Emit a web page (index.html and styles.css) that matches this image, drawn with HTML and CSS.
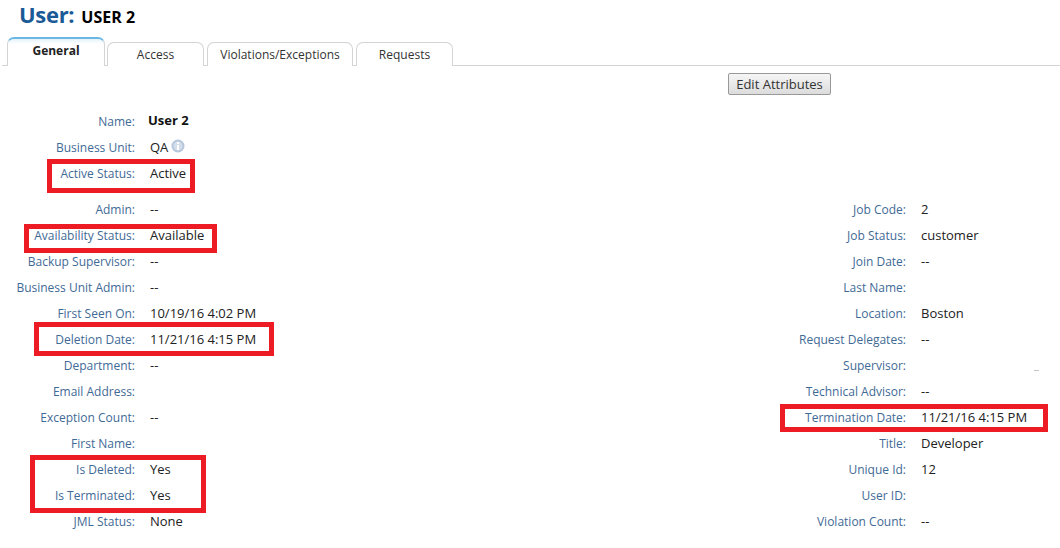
FILE: index.html
```html
<!DOCTYPE html>
<html>
    <head>
        <title>User: USER 2</title>
        <link rel="stylesheet" href="styles.css">
    </head>
    <body>
        <div class="Title">
            <h1>User:</h1>
            <h2>USER 2</h2>
        </div>

        <div class="Tabs">
            <a class="Tab Active">General</a>
            <a class="Tab">Access</a>
            <a class="Tab Wide">Violations/Exceptions</a>
            <a class="Tab">Requests</a>
        </div>

        <div class="Actions">
            <button class="Button">Edit Attributes</button>
        </div>

        <div class="Top">
            <div class="Row"><span class="Label">Name:</span><b class="Value">User 2</b></div>
            <div class="Row">
                <span class="Label">Business Unit:</span>
                <span class="Value">QA</span>
                <svg class="Info" width="14" height="14" viewBox="0 0 14 14">
                    <circle cx="7" cy="7" r="6.5" fill="#b5c6dc"/>
                    <circle cx="7" cy="7" r="4.6" fill="#d3deea"/>
                    <rect x="6" y="6" width="2" height="5" fill="#fff"/>
                    <rect x="6" y="3" width="2" height="2" fill="#fff"/>
                </svg>
            </div>
            <div class="Row"><span class="Label">Active Status:</span><span class="Value">Active</span></div>
        </div>

        <div class="Columns">
            <div class="Col Left">
                <div class="Row"><span class="Label">Admin:</span><span class="Value">--</span></div>
                <div class="Row"><span class="Label">Availability Status:</span><span class="Value">Available</span></div>
                <div class="Row"><span class="Label">Backup Supervisor:</span><span class="Value">--</span></div>
                <div class="Row"><span class="Label">Business Unit Admin:</span><span class="Value">--</span></div>
                <div class="Row"><span class="Label">First Seen On:</span><span class="Value">10/19/16 4:02 PM</span></div>
                <div class="Row"><span class="Label">Deletion Date:</span><span class="Value">11/21/16 4:15 PM</span></div>
                <div class="Row"><span class="Label">Department:</span><span class="Value">--</span></div>
                <div class="Row"><span class="Label">Email Address:</span><span class="Value"></span></div>
                <div class="Row"><span class="Label">Exception Count:</span><span class="Value">--</span></div>
                <div class="Row"><span class="Label">First Name:</span><span class="Value"></span></div>
                <div class="Row"><span class="Label">Is Deleted:</span><span class="Value">Yes</span></div>
                <div class="Row"><span class="Label">Is Terminated:</span><span class="Value">Yes</span></div>
                <div class="Row"><span class="Label">JML Status:</span><span class="Value">None</span></div>
            </div>
            <div class="Col">
                <div class="Row"><span class="Label">Job Code:</span><span class="Value">2</span></div>
                <div class="Row"><span class="Label">Job Status:</span><span class="Value">customer</span></div>
                <div class="Row"><span class="Label">Join Date:</span><span class="Value">--</span></div>
                <div class="Row"><span class="Label">Last Name:</span><span class="Value"></span></div>
                <div class="Row"><span class="Label">Location:</span><span class="Value">Boston</span></div>
                <div class="Row"><span class="Label">Request Delegates:</span><span class="Value">--</span></div>
                <div class="Row"><span class="Label">Supervisor:</span><span class="Value"></span></div>
                <div class="Row"><span class="Label">Technical Advisor:</span><span class="Value">--</span></div>
                <div class="Row"><span class="Label">Termination Date:</span><span class="Value">11/21/16 4:15 PM</span></div>
                <div class="Row"><span class="Label">Title:</span><span class="Value">Developer</span></div>
                <div class="Row"><span class="Label">Unique Id:</span><span class="Value">12</span></div>
                <div class="Row"><span class="Label">User ID:</span><span class="Value"></span></div>
                <div class="Row"><span class="Label">Violation Count:</span><span class="Value">--</span></div>
            </div>
        </div>

        <!-- Red highlights drawn over the screenshot -->
        <div class="Mark MarkActive"></div>
        <div class="Mark MarkAvail"></div>
        <div class="Mark MarkDeletion"></div>
        <div class="Mark MarkDeleted"></div>
        <div class="Mark MarkTermination"></div>
        <div class="Smudge"></div>
    </body>
</html>
```

FILE: styles.css
```css
html, body {
    height: 100%;
    overflow: hidden;
}
body {
    margin: 0;
    position: relative;
    background-color: #fff;
    font-family: "Open Sans", "Liberation Sans", sans-serif;
    font-size: 12px;
    color: #222;
}
.Title {
    display: flex;
    align-items: baseline;
    gap: 7px;
    height: 37px;
    padding-left: 19px;
    box-sizing: border-box;
}
h1 {
    margin: 0;
    font-size: 22px;
    line-height: 28px;
    font-weight: 700;
    letter-spacing: -0.3px;
    color: #1a5a96;
}
h2 {
    margin: 0;
    font-size: 16px;
    line-height: 28px;
    font-weight: 700;
    color: #000;
}
.Tabs {
    display: flex;
    align-items: flex-end;
    gap: 3px;
    height: 29px;
    margin-left: 2px;
    padding-left: 5px;
    border-bottom: 1px solid #d4d4d4;
    box-sizing: border-box;
}
.Tab {
    width: 97px;
    height: 24px;
    box-sizing: border-box;
    margin-bottom: -1px;
    border: 1px solid #d4d4d4;
    border-bottom: 0;
    border-radius: 7px 7px 0 0;
    background-color: #fff;
    text-align: center;
    line-height: 23px;
    color: #333;
}
.Wide {
    width: 146px;
}
.Active {
    width: 98px;
    height: 29px;
    margin-right: -1px;
    border-top: 2px solid #6cb8e4;
    line-height: 23px;
    font-weight: 700;
    color: #222;
    background-image: linear-gradient(#e4f3fb, #fff 5px);
}
.Actions {
    height: 42px;
    padding: 7px 0 0 728px;
    box-sizing: border-box;
}
.Button {
    width: 103px;
    height: 22px;
    padding: 0;
    border: 1px solid #999;
    border-radius: 2px;
    background-image: linear-gradient(#f6f6f6, #dcdcdc);
    font-family: inherit;
    font-size: 13px;
    color: #333;
}
.Top {
    margin-bottom: 10px;
}
.Columns {
    display: flex;
}
.Left {
    width: 771px;
}
.Row {
    display: flex;
    align-items: center;
    height: 26px;
}
.Label {
    width: 135px;
    text-align: right;
    color: #3f6a96;
    white-space: nowrap;
    flex-shrink: 0;
    display: flex;
    justify-content: flex-end;
}
.Value {
    margin-left: 15px;
    font-size: 13px;
}
b.Value {
    margin-left: 13px;
    margin-bottom: 2px;
    color: #111;
}
.Info {
    margin-left: 3px;
    margin-top: -3px;
}
.Mark {
    position: absolute;
    border: 5px solid #ed1c24;
    box-sizing: border-box;
}
.MarkActive {
    left: 47px;
    top: 159px;
    width: 148px;
    height: 34px;
}
.MarkAvail {
    left: 24px;
    top: 224px;
    width: 193px;
    height: 29px;
}
.MarkDeletion {
    left: 34px;
    top: 322px;
    width: 240px;
    height: 34px;
}
.MarkDeleted {
    left: 30px;
    top: 455px;
    width: 176px;
    height: 58px;
}
.MarkTermination {
    left: 780px;
    top: 404px;
    width: 268px;
    height: 28px;
}
.Smudge {
    position: absolute;
    left: 1034px;
    top: 370px;
    width: 5px;
    height: 1px;
    background-color: #c4c4c4;
}
```
